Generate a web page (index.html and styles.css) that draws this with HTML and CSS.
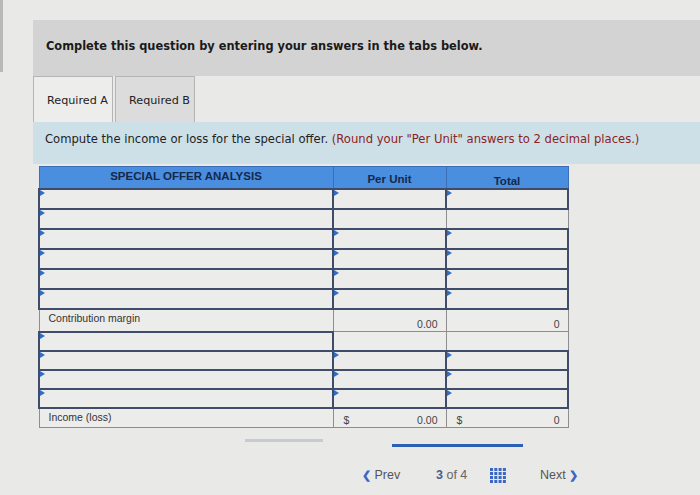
FILE: index.html
```html
<!DOCTYPE html>
<html>
<head>
<meta charset="utf-8">
<link rel="stylesheet" href="styles.css">
</head>
<body>
<div class="edge"></div>
<div class="page">
  <div class="top-bar">Complete this question by entering your answers in the tabs below.</div>
  <div class="tabs">
    <div class="tab active">Required A</div>
    <div class="tab">Required B</div>
  </div>
  <div class="info-bar">Compute the income or loss for the special offer. <span class="red">(Round your "Per Unit" answers to 2 decimal places.)</span></div>
  <table class="grid">
    <colgroup><col class="c1"><col class="c2"><col class="c3"></colgroup>
    <thead>
      <tr><th>SPECIAL OFFER ANALYSIS</th><th class="lower">Per Unit</th><th class="lower2">Total</th></tr>
    </thead>
    <tbody>
      <tr><td class="in"></td><td class="in"></td><td class="in"></td></tr>
      <tr><td class="in"></td><td class="ro"></td><td class="ro"></td></tr>
      <tr><td class="in"></td><td class="in"></td><td class="in"></td></tr>
      <tr><td class="in"></td><td class="in"></td><td class="in"></td></tr>
      <tr><td class="in"></td><td class="in"></td><td class="in"></td></tr>
      <tr><td class="in"></td><td class="in"></td><td class="in"></td></tr>
      <tr class="tall"><td class="ro lbl">Contribution margin</td><td class="ro num">0.00</td><td class="ro num">0</td></tr>
      <tr class="short"><td class="in"></td><td class="ro"></td><td class="ro"></td></tr>
      <tr class="short"><td class="in"></td><td class="in"></td><td class="in"></td></tr>
      <tr class="short"><td class="in"></td><td class="in"></td><td class="in"></td></tr>
      <tr class="short"><td class="in"></td><td class="in"></td><td class="in"></td></tr>
      <tr><td class="ro lbl">Income (loss)</td><td class="ro num"><span class="cur">$</span>0.00</td><td class="ro num"><span class="cur">$</span>0</td></tr>
    </tbody>
  </table>
  <div class="scrolls">
    <div class="bar-grey"></div>
    <div class="bar-blue"></div>
  </div>
  <div class="nav">
    <div class="prev"><span class="chev">&#10094;</span> Prev</div>
    <div class="count"><b>3</b> of 4</div>
    <svg class="gridicon" width="16" height="15" viewBox="0 0 16 15">
      <g fill="#3a66c4">
        <rect x="0" y="0" width="3" height="3"/><rect x="4.3" y="0" width="3" height="3"/><rect x="8.6" y="0" width="3" height="3"/><rect x="12.9" y="0" width="3" height="3"/>
        <rect x="0" y="4" width="3" height="3"/><rect x="4.3" y="4" width="3" height="3"/><rect x="8.6" y="4" width="3" height="3"/><rect x="12.9" y="4" width="3" height="3"/>
        <rect x="0" y="8" width="3" height="3"/><rect x="4.3" y="8" width="3" height="3"/><rect x="8.6" y="8" width="3" height="3"/><rect x="12.9" y="8" width="3" height="3"/>
        <rect x="0" y="12" width="3" height="3"/><rect x="4.3" y="12" width="3" height="3"/><rect x="8.6" y="12" width="3" height="3"/><rect x="12.9" y="12" width="3" height="3"/>
      </g>
    </svg>
    <div class="next">Next <span class="chev">&#10095;</span></div>
  </div>
</div>
</body>
</html>
```

FILE: styles.css
```css
html, body {
  margin: 0;
  padding: 0;
}
body {
  background: #e9e9e7;
  width: 700px;
  height: 495px;
  overflow: hidden;
  position: relative;
  font-family: "DejaVu Sans", Verdana, sans-serif;
}
.edge {
  position: absolute;
  left: 0;
  top: 0;
  width: 3px;
  height: 72px;
  background: #b9b9b9;
}
.page {
  padding: 20px 0 0 33px;
}
.top-bar {
  height: 56px;
  background: #d3d3d3;
  padding: 19px 0 0 13px;
  box-sizing: border-box;
  font-weight: bold;
  font-size: 11.4px;
  color: #1a1a1a;
}
.tabs {
  display: flex;
  gap: 2px;
  height: 46px;
}
.tab {
  width: 80px;
  box-sizing: border-box;
  border: 1px solid #b5b5b5;
  border-bottom: none;
  background: #dcdcdc;
  font-size: 11.2px;
  color: #222;
  padding: 17px 0 0 13px;
}
.tab.active {
  background: #ededec;
}
.info-bar {
  background: #cde0e8;
  height: 42px;
  box-sizing: border-box;
  padding: 10px 0 0 12px;
  font-size: 11.6px;
  color: #222;
  white-space: nowrap;
}
.red {
  color: #8b2323;
}
.grid {
  margin: 2px 0 0 5px;
  border-collapse: collapse;
  table-layout: fixed;
  width: 529px;
  font-family: "Liberation Sans", Arial, sans-serif;
}
.c1 { width: 294px; }
.c2 { width: 113px; }
.c3 { width: 122px; }
.grid th {
  background: #4a8ee0;
  height: 22px;
  padding: 0;
  font-size: 11.5px;
  font-weight: bold;
  color: #15284a;
  border: 1px solid #3d6fb8;
  border-bottom: 2px solid #3e4c68;
  vertical-align: top;
  padding-top: 3px;
  box-sizing: border-box;
}
.grid th.lower { padding-top: 6px; }
.grid th.lower2 { padding-top: 8px; }
.grid td {
  height: 20px;
  padding: 0;
  background: #ececeb;
  position: relative;
  font-size: 10.5px;
  color: #444;
  box-sizing: border-box;
}
.grid tr.tall td {
  height: 23px;
}
.grid tr.short td {
  height: 19px;
}
.grid td.in {
  border: 2px solid #3f4d6a;
}
.grid td.in::before {
  content: "";
  position: absolute;
  left: 0;
  top: 0;
  border-top: 3px solid transparent;
  border-bottom: 3px solid transparent;
  border-left: 5px solid #2f6ec8;
}
.grid td.ro {
  border: 1px solid #8e8e8e;
}
.grid td.lbl {
  padding-left: 9px;
  vertical-align: top;
  padding-top: 2px;
  color: #333;
}
.grid td.num {
  text-align: right;
  padding-right: 8px;
  vertical-align: bottom;
  padding-bottom: 1px;
}
.cur {
  float: left;
  padding-left: 10px;
}
.scrolls {
  position: relative;
  height: 28px;
}
.bar-grey {
  position: absolute;
  left: 212px;
  top: 11px;
  width: 78px;
  height: 3px;
  background: #c6cbd1;
}
.bar-blue {
  position: absolute;
  left: 359px;
  top: 16px;
  width: 131px;
  height: 3px;
  background: #2b60b4;
}
.nav {
  display: flex;
  align-items: center;
  height: 38px;
  margin-left: 329px;
  font-family: "Liberation Sans", Arial, sans-serif;
  font-size: 12.5px;
  color: #555;
}
.chev {
  color: #3a66c4;
  font-weight: bold;
  font-size: 11px;
}
.prev {
  width: 74px;
}
.count {
  width: 54px;
  color: #666;
}
.count b {
  color: #44618e;
}
.gridicon {
  margin-right: 34px;
}
```
